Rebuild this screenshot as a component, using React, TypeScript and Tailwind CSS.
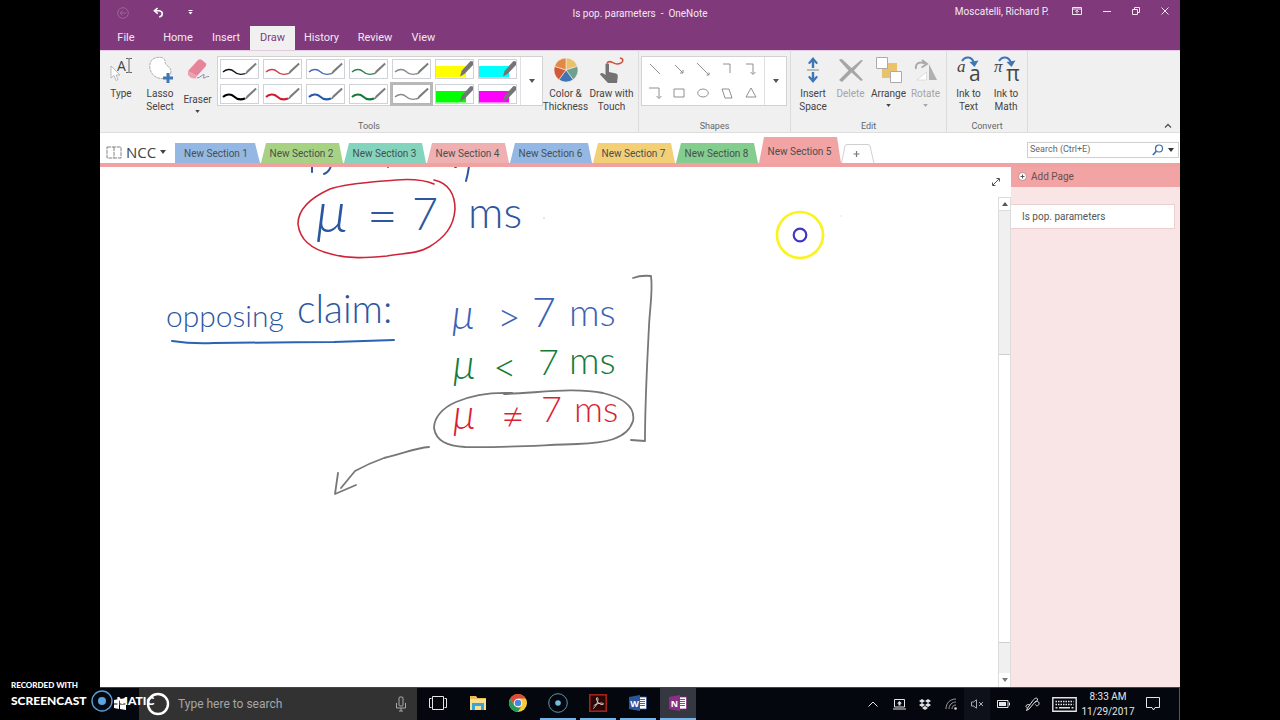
import React from "react";

const cx = (...parts: (string | false | undefined)[]) => parts.filter(Boolean).join(" ");

function Caret({ className }: { className?: string }) {
  return (
    <svg width="6" height="4" viewBox="0 0 6 4" className={className} aria-hidden="true">
      <path d="M0 0h6L3 4z" fill="currentColor" />
    </svg>
  );
}

/* ---------- Title bar ---------- */

function TitleBar() {
  return (
    <header className="relative flex h-[26px] items-center bg-[#80397b] text-[10px] text-[#f3e8f2]">
      <div className="flex items-center gap-6 pl-[17px]">
        <button aria-label="Back" className="text-[#9c6498]">
          <svg width="12" height="12" viewBox="0 0 12 12" fill="none" stroke="currentColor">
            <circle cx="6" cy="6" r="5.3" />
            <path d="M9 6H3.2M5.500 3.600 3.100 6l2.400 2.400" />
          </svg>
        </button>
        <button aria-label="Undo" className="pb-[2px] text-white">
          <svg width="11" height="11" viewBox="0 0 11 11" fill="none" stroke="currentColor" strokeWidth="1.600">
            <path d="M4.600 1 1.400 3.800l3.400 2.800M1.600 3.800h4.600c4.200.4 4 5.600 0 6.200" />
          </svg>
        </button>
        <button aria-label="Customize toolbar" className="pb-[2px] text-white">
          <svg width="5" height="5" viewBox="0 0 5 5" fill="currentColor">
            <path d="M.5 0h4v1h-4zM.5 2h4l-2 2.400z" />
          </svg>
        </button>
      </div>
      <h1 className="absolute inset-x-0 text-center">Is pop. parameters&nbsp; -&nbsp; OneNote</h1>
      <div className="relative ml-auto flex items-center pr-[11px]">
        <span className="mr-[23px] pb-1">Moscatelli, Richard P.</span>
        <div className="flex items-center gap-[21px] pb-[5px]">
          <button aria-label="Ribbon display options">
            <svg width="10" height="8" viewBox="0 0 10 8" fill="none" stroke="currentColor">
              <path d="M.5.5h9v7h-9zM.5 2h9M5 6.500V3.200M3.400 4.800 5 3.200l1.600 1.600" />
            </svg>
          </button>
          <button aria-label="Minimize">
            <svg width="8" height="8" viewBox="0 0 8 8" stroke="currentColor">
              <path d="M0 4.500h8" />
            </svg>
          </button>
          <button aria-label="Restore">
            <svg width="8" height="8" viewBox="0 0 8 8" fill="none" stroke="currentColor">
              <path d="M.5 2.500h5v5h-5zM2.500 2.500v-2h5v5h-2" />
            </svg>
          </button>
          <button aria-label="Close">
            <svg width="8" height="8" viewBox="0 0 8 8" stroke="currentColor">
              <path d="m.5.5 7 7m0-7-7 7" />
            </svg>
          </button>
        </div>
      </div>
    </header>
  );
}

const menuTabs = ["File", "Home", "Insert", "Draw", "History", "Review", "View"];

function MenuTabs() {
  return (
    <nav className="flex h-6 bg-[#80397b] pl-[7px] text-[11px] text-[#f3e8f2]">
      {menuTabs.map((t) => (
        <button
          key={t}
          className={cx(
            "text-center",
            t === "File" && "mr-[5px] w-[38px]",
            t === "Home" && "w-14",
            t === "Insert" && "w-10",
            t === "Draw" && "ml-1 w-[45px] bg-[#f1f0f0] text-[#80397b]",
            t === "History" && "w-[53px]",
            t === "Review" && "w-[54px]",
            t === "View" && "w-[43px]"
          )}
        >
          {t}
        </button>
      ))}
    </nav>
  );
}

/* ---------- Ribbon ---------- */

function RibbonButton({
  icon,
  label,
  width,
  low,
  dim,
  menu,
}: {
  icon: React.ReactNode;
  label: string[];
  width: string;
  low?: boolean;
  dim?: boolean;
  menu?: boolean;
}) {
  return (
    <button className={cx("flex shrink-0 flex-col items-center", width, dim ? "text-[#a5a5a5]" : "text-[#444]")}>
      <span className={cx("flex h-7 items-center justify-center", low && "mb-[6px]")}>{icon}</span>
      <span className="mt-[3px] flex flex-col text-[10px] leading-[13px] whitespace-nowrap">
        {label.map((l) => (
          <span key={l}>{l}</span>
        ))}
      </span>
      {menu && <Caret className="mt-1 h-[3px] w-[5px]" />}
    </button>
  );
}

function Group({ name, width, children }: { name: string; width: string; children: React.ReactNode }) {
  return (
    <section className={cx("flex shrink-0 flex-col border-r border-[#dcdcdc] pt-[6px]", width)}>
      <div className="flex h-[62px] items-start">{children}</div>
      <h2 className="mt-[3px] text-center text-[9px] leading-3 text-[#666]">{name}</h2>
    </section>
  );
}

function Pen({ color, bold, active }: { color: string; bold?: boolean; active?: boolean }) {
  return (
    <button
      aria-label="Pen"
      className={cx(
        "h-5 w-[39px] border bg-white",
        active ? "border-[#b5b5b5] outline-2 outline-[#b9b9b9]" : "border-[#cfd2d6]"
      )}
    >
      <svg width="37" height="18" viewBox="0 0 37 18" fill="none">
        <path d="M2 12c3-3 8-3.500 11-.5s7 3.500 11 2" stroke={color} strokeWidth={bold ? 2 : 1.3} />
        <path d="m23 15 3-4.500L34.500 2.800 35.800 4.200 26 13.500z" fill="#7b7b7b" />
      </svg>
    </button>
  );
}

function Highlighter({ color }: { color: string }) {
  return (
    <button aria-label="Highlighter" className="h-5 w-[39px] border border-[#cfd2d6] bg-white">
      <svg width="37" height="18" viewBox="0 0 37 18">
        <path d="M0 6h30v11.500H0z" fill={color} />
        <path d="m24 16.500 1.500-5.500 9-10 2.500.5V5l-8.500 9z" fill="#757575" />
      </svg>
    </button>
  );
}

function ToolGallery() {
  return (
    <div className="flex h-[50px] shrink-0 border border-[#d2d2d2] bg-white">
      <div className="grid grid-cols-[repeat(7,39px)] content-start gap-x-1 gap-y-[5px] pt-[2px] pr-[3px] pl-[2px]">
        <Pen color="#111" />
        <Pen color="#d13a48" />
        <Pen color="#4a68b8" />
        <Pen color="#2e8050" />
        <Pen color="#888" />
        <Highlighter color="#ffff00" />
        <Highlighter color="#00ffff" />
        <Pen color="#000" bold />
        <Pen color="#cf1d2b" bold />
        <Pen color="#2359ad" bold />
        <Pen color="#15793a" bold />
        <Pen color="#888" active />
        <Highlighter color="#00ff00" />
        <Highlighter color="#ff00ff" />
      </div>
      <button aria-label="More pens" className="flex w-[22px] items-center justify-center border-l border-[#e0e0e0] text-[#555]">
        <Caret />
      </button>
    </div>
  );
}

const shapes = [
  "M3 4l10 10",
  "M4 5l8 8M12 10v3H9",
  "M2 3l12 12M14 12.500V15h-2.500",
  "M4 4h7v9",
  "M3 4h7v10M7.500 12l2.500 2.500 2.500-2.500",
  "M4 4h8v10M9.500 12l2.500 2.500 2.500-2.500M4 4H2",
  "M3 5h10v8H3z",
  "M8 5c7 .3 7 7.700 0 8C1 12.700 1 5.300 8 5z",
  "M3 5h7l3 9H6z",
  "M8 4l5 9H3z",
];

function ShapeGallery() {
  return (
    <div className="ml-[2px] flex h-[50px] border border-[#d2d2d2] bg-white">
      <div className="grid grid-cols-[repeat(5,24px)] grid-rows-2 items-center justify-items-center pl-px pr-px">
        {shapes.map((d) => (
          <button key={d} aria-label="Shape">
            <svg width="16" height="18" viewBox="0 0 16 18" fill="none" stroke="#858585" strokeWidth="0.9">
              <path d={d} />
            </svg>
          </button>
        ))}
      </div>
      <button aria-label="More shapes" className="flex w-[22px] items-center justify-center border-l border-[#e0e0e0] text-[#555]">
        <Caret />
      </button>
    </div>
  );
}

const TypeIcon = (
  <svg width="24" height="26" viewBox="0 0 24 26" fill="none">
    <path d="M2 9v12l3-2.500 2 5 2-1-2-4.500h4z" fill="#fff" stroke="#aaa" strokeWidth=".8" />
    <text x="8" y="14" fontSize="14" fontFamily="Open Sans, sans-serif" fill="#444">A</text>
    <path d="M17 1.500h2.500l.5.500.5-.5H23M20 2v13M17 15.500h2.500l.5-.5.500.5H23" stroke="#555" strokeWidth=".9" />
  </svg>
);
const LassoIcon = (
  <svg width="26" height="28" viewBox="0 0 26 28">
    <path d="M6 3c5-3 12-2 12 2-.500 5 6 5 6 11-1 7-10 8-15 5C3 18 0 8 6 3z" fill="#fff" stroke="#9a9a9a" strokeWidth=".8" strokeDasharray="3 .7" />
    <path d="M21 17v10M16 22h10" stroke="#3f76b5" strokeWidth="3" />
  </svg>
);
const EraserIcon = (
  <svg width="24" height="24" viewBox="0 0 24 24" fill="none">
    <path d="m2 13 10-11q2-1.500 4 0l4 3.500q.8 1.500-.5 3L11 18z" fill="#e6849a" />
    <path d="m2 13 9 5-1.500 2.500Q5 21 2 17z" fill="#ee9fb0" />
    <path d="M11 20c3 0 6-4 7-3.500s-2 4 0 3.500 3-2 5-1.500" stroke="#7e90a8" />
  </svg>
);
const wheel = [
  ["M12 12V0a12 12 0 0 1 11.400 8.300z", "#ecc06b"],
  ["M12 12l11.400-3.700a12 12 0 0 1-4.300 13.400z", "#6ea08c"],
  ["M12 12l7.100 9.700a12 12 0 0 1-14.200 0z", "#3f75b3"],
  ["M12 12l-7.100 9.700A12 12 0 0 1 .6 8.300z", "#d2583a"],
  ["M12 12L.6 8.300A12 12 0 0 1 12 0z", "#e28a45"],
];
const ColorIcon = (
  <svg width="24" height="24" viewBox="0 0 24 24" stroke="#f1f0f0" strokeWidth=".6">
    {wheel.map(([d, f]) => (
      <path key={f} d={d} fill={f} />
    ))}
  </svg>
);
const TouchIcon = (
  <svg width="26" height="27" viewBox="0 0 26 27" fill="none">
    <path d="M8 6c3-4 6 1 10 1 6-.300 8-5 3-6" stroke="#d14f3e" strokeWidth="1.600" />
    <path d="M6.500 7q1.800-1.500 3.500 0v8l7 1.500q2 .6 1.800 3L18 26H9L1 17.500q.500-2.300 3-1.200L6.500 18z" fill="#737373" />
  </svg>
);
const SpaceIcon = (
  <svg width="14" height="26" viewBox="0 0 14 26">
    <path d="M1 13h12" stroke="#bbb" strokeWidth="2" />
    <path d="M7 0l5 6-1.500 1.300L8.200 5v6H5.800V5L3.500 7.300 2 6zM7 26l5-6-1.500-1.300L8.200 21v-6H5.800v6l-2.300-2.300L2 20z" fill="#3f76b5" />
  </svg>
);
const DeleteIcon = (
  <svg width="26" height="24" viewBox="0 0 26 24">
    <path d="M1 2q2-2 4 0l8.500 8L23 2l2 .5L16 12.500l9 9.500-2 1-9.500-8.500L4 24l-3-2 9.500-9.500z" fill="#a6a6a6" />
  </svg>
);
const ArrangeIcon = (
  <svg width="26" height="26" viewBox="0 0 26 26">
    <path d="M6 6h15v15H6z" fill="#eac26c" />
    <path d="M.5.5h11v11H.5zM14.500 14.500h11v11h-11z" fill="#fff" stroke="#aaa" />
  </svg>
);
const RotateIcon = (
  <svg width="24" height="24" viewBox="0 0 24 24" fill="none">
    <path d="M2 11C1 5 6 3 11 5.500" stroke="#aaa" strokeWidth="2" />
    <path d="m8 2 5 4-5.500 3.500" stroke="#aaa" strokeWidth="2" />
    <path d="M15 6v16h8z" fill="#b0b0b0" />
    <path d="M12.500 14v8H3z" fill="#fff" stroke="#ccc" strokeWidth=".6" />
  </svg>
);
function ConvertIcon({ glyph }: { glyph: string }) {
  return (
    <svg width="28" height="28" viewBox="0 0 28 28">
      <text x="2" y="16" fontSize="17" fontStyle="italic" fontFamily="Liberation Serif, serif" fill="#444">{glyph}</text>
      <text x="14" y="25" fontSize="21" fontWeight="500" fontFamily="Open Sans, sans-serif" fill="#444">{glyph}</text>
      <path d="M7 5c3-5 10-5 12 2" fill="none" stroke="#3f76b5" strokeWidth="2" />
      <path d="m14.500 6 9-1.500L19.500 11z" fill="#3f76b5" />
    </svg>
  );
}

function Ribbon() {
  return (
    <div className="flex h-[83px] border-b border-[#dedede] bg-[#f1f0f0] shadow-[inset_0_1px_0_#e3cbe2]">
      <Group name="Tools" width="w-[539px]">
        <div className="flex">
          <RibbonButton icon={TypeIcon} label={["Type"]} width="w-[42px]" />
          <RibbonButton icon={LassoIcon} label={["Lasso", "Select"]} width="w-9" />
          <RibbonButton icon={EraserIcon} label={["Eraser"]} width="w-[39px]" low menu />
        </div>
        <ToolGallery />
        <div className="flex">
          <RibbonButton icon={ColorIcon} label={["Color &", "Thickness"]} width="w-[45px]" />
          <RibbonButton icon={TouchIcon} label={["Draw with", "Touch"]} width="w-[47px]" />
        </div>
      </Group>
      <Group name="Shapes" width="w-[152px]">
        <ShapeGallery />
      </Group>
      <Group name="Edit" width="w-[156px]">
        <div className="flex pl-1">
          <RibbonButton icon={SpaceIcon} label={["Insert", "Space"]} width="w-9" />
          <RibbonButton icon={DeleteIcon} label={["Delete"]} width="w-[39px]" dim />
          <RibbonButton icon={ArrangeIcon} label={["Arrange"]} width="w-[37px]" menu />
          <RibbonButton icon={RotateIcon} label={["Rotate"]} width="w-[37px]" dim menu />
        </div>
      </Group>
      <Group name="Convert" width="w-[81px]">
        <div className="flex pl-[3px]">
          <RibbonButton icon={<ConvertIcon glyph="a" />} label={["Ink to", "Text"]} width="w-[37px]" />
          <RibbonButton icon={<ConvertIcon glyph="π" />} label={["Ink to", "Math"]} width="w-[38px]" />
        </div>
      </Group>
      <button aria-label="Collapse the ribbon" className="mt-auto mr-2 mb-[3px] ml-auto text-[#555]">
        <svg width="8" height="6" viewBox="0 0 8 6" fill="none" stroke="currentColor" strokeWidth="1.300">
          <path d="m1 4.500 3-3 3 3" />
        </svg>
      </button>
    </div>
  );
}

/* ---------- Section tabs ---------- */

const sections = [
  { name: "New Section 1", color: "bg-[#94b8e3]" },
  { name: "New Section 2", color: "bg-[#a7d284]" },
  { name: "New Section 3", color: "bg-[#84d3bd]" },
  { name: "New Section 4", color: "bg-[#efb0b2]" },
  { name: "New Section 6", color: "bg-[#94b8e3]" },
  { name: "New Section 7", color: "bg-[#f3d078]" },
  { name: "New Section 8", color: "bg-[#84cd8f]" },
  { name: "New Section 5", color: "bg-[#f2a3a4]", active: true },
];

function SectionBar() {
  return (
    <div className="flex h-[34px] items-end border-b-4 border-[#f0a2a3] bg-white">
      <button className="flex h-full w-[75px] shrink-0 items-center gap-1 pt-2 pl-[6px] text-[#444]">
        <svg width="16" height="13" viewBox="0 0 16 13" fill="none" stroke="#777">
          <path d="M1 1h14v11H1zM8 1v11" strokeWidth=".9" strokeDasharray="4 .8" />
        </svg>
        <span className="font-['Open_Sans'] text-[15px] leading-5">NCC</span>
        <Caret />
      </button>
      {sections.map((s, i) => (
        <button
          key={s.name}
          className={cx(
            "shrink-0 text-[10px] text-[#47504f]",
            s.color,
            s.active ? "h-[26px] pt-[2px]" : "h-5 pt-px",
            i === 0
              ? "w-[85px] pr-[3px] [clip-path:polygon(0_0,calc(100%_-_5px)_0,100%_100%,0_100%)]"
              : "w-[83px] [clip-path:polygon(6px_0,calc(100%_-_4px)_0,100%_100%,1px_100%)]"
          )}
        >
          {s.name}
        </button>
      ))}
      <button aria-label="Create a new section" className="shrink-0">
        <svg width="34" height="19" viewBox="0 0 34 19" fill="none">
          <path d="M.5 19 4 2q.3-1.500 2-1.500h21q1.500 0 2 1.500l4 17" stroke="#d0d0d0" />
          <path d="M12.500 10h6M15.500 7v6" stroke="#777" strokeWidth="1.200" />
        </svg>
      </button>
      <div className="mr-px mb-[5px] ml-auto flex h-4 w-[152px] items-center border border-[#cfcfcf] pr-1 pl-[2px]">
        <input
          aria-label="Search"
          placeholder="Search (Ctrl+E)"
          className="min-w-0 flex-1 bg-transparent text-[9px] outline-none placeholder:text-[#666]"
        />
        <svg width="12" height="12" viewBox="0 0 12 12" fill="none" stroke="#3b6ba5" strokeWidth="1.200">
          <circle cx="7" cy="4.500" r="3.500" />
          <path d="M4.300 7.200.8 11" strokeWidth="1.600" />
        </svg>
        <Caret className="ml-1 text-[#333]" />
      </div>
    </div>
  );
}

/* ---------- Note canvas ---------- */

type InkWord = { t: string; x: number; y: number; size: number; fill: string; italic?: boolean };

const blue = "#2b579f";
const lightBlue = "#3c62b4";
const green = "#167a3c";
const red = "#d91f33";

const words: InkWord[] = [
  { t: "μ", x: 316, y: 232, size: 58, fill: blue, italic: true },
  { t: "=", x: 367, y: 235, size: 53, fill: blue },
  { t: "7", x: 412, y: 230, size: 45, fill: blue },
  { t: "ms", x: 468, y: 228, size: 44, fill: blue },
  { t: "opposing", x: 166, y: 327, size: 30, fill: blue },
  { t: "claim:", x: 297, y: 323, size: 39, fill: blue },
  { t: "μ", x: 452, y: 329, size: 41, fill: lightBlue, italic: true },
  { t: ">", x: 497, y: 332, size: 41, fill: lightBlue },
  { t: "7", x: 532, y: 327, size: 41, fill: lightBlue },
  { t: "ms", x: 569, y: 326, size: 38, fill: lightBlue },
  { t: "μ", x: 453, y: 379, size: 41, fill: green, italic: true },
  { t: "<", x: 493, y: 382, size: 41, fill: green },
  { t: "7", x: 538, y: 375, size: 36, fill: green },
  { t: "ms", x: 569, y: 374, size: 38, fill: green },
  { t: "μ", x: 453, y: 429, size: 41, fill: red, italic: true },
  { t: "≠", x: 501, y: 431, size: 41, fill: red },
  { t: "7", x: 541, y: 422, size: 36, fill: red },
  { t: "ms", x: 574, y: 422, size: 36, fill: red },
];

function Ink() {
  return (
    <svg className="absolute inset-0 h-full w-full" fill="none" strokeLinecap="round" strokeLinejoin="round">
      <g transform="translate(-100 -167)">
        <g stroke={blue} strokeWidth="2">
          <path d="M312 166v6M331 166q-2 6-7 8M388 166v1M455 167l1 0M469 166q-1 8-3 15" />
        </g>
        {words.map((w, i) => (
          <text
            key={i}
            x={w.x}
            y={w.y}
            fontSize={w.size}
            fill={w.fill}
            fontWeight="300"
            fontStyle={w.italic ? "italic" : "normal"}
            fontFamily="Lato, sans-serif"
          >
            {w.t}
          </text>
        ))}
        <path
          d="M434 184c-12-5-25-5-38-4-22 2-48 3-66 9-20 9-32 20-32 35 2 18 16 26 33 30 18 5 34 4 56 2 16-3 30-2 42-9 15-9 25-20 26-38 0-14-6-26-21-29"
          stroke="#cd2638"
          strokeWidth="1.600"
        />
        <path d="M172 341q20 3 42 2c45 0 80-1 120-1l60-2" stroke="#2b62b4" strokeWidth="2" />
        <g stroke="#777" strokeWidth="1.800">
          <path d="M633 278q8-3 18-2c2 15-1 30-2 50-2 40-4 75-4 115l-14-1" />
          <path d="M512 393c-22-1-42 3-56 9-14 6-22 16-22 26 2 13 13 18 31 19 38 1 78-2 112-3 27-1 50-4 56-23 3-16-14-24-30-28-30-6-65 0-99 1" />
          <path d="M429 447c-15 1-26 7-45 11-14 5-20 8-29 13l-14 17M338 473l-3 21 21-9" />
        </g>
        <g fill="#d8dce8">
          <circle cx="544" cy="218" r="1" />
          <circle cx="841" cy="216" r="0.700" />
        </g>
        <circle cx="800" cy="235" r="23" stroke="#fbf220" strokeWidth="2.600" />
        <circle cx="800" cy="235" r="6.300" stroke="#4138c0" strokeWidth="2.200" />
      </g>
    </svg>
  );
}

function NoteArea() {
  return (
    <div className="flex min-h-[520px] flex-1">
      <main className="relative min-w-0 flex-1 overflow-hidden bg-white">
        <Ink />
        <button aria-label="Full page view" className="absolute top-[11px] right-[11px] text-[#555]">
          <svg width="8" height="8" viewBox="0 0 8 8" fill="none" stroke="currentColor">
            <path d="M1 7l6-6M4.500.5h3v3M3.500 7.500h-3v-3" />
          </svg>
        </button>
        <div className="absolute top-[30px] right-0 bottom-0 flex w-[13px] flex-col border-x border-[#dcdcdc] bg-[#f0f0f0]">
          <button aria-label="Scroll up" className="flex h-[14px] items-center justify-center border-y border-[#dcdcdc] bg-white text-[#555]">
            <Caret className="rotate-180" />
          </button>
          <div className="basis-[143px]" />
          <div className="flex-1 border-y border-[#cfcfcf] bg-white" />
          <div className="basis-[30px]" />
          <button aria-label="Scroll down" className="flex h-[14px] items-center justify-center bg-white text-[#777]">
            <Caret />
          </button>
        </div>
      </main>
      <aside className="w-[169px] shrink-0 bg-[#fae5e6]">
        <button className="flex h-5 w-full items-center gap-1 bg-[#f2a3a4] pb-[2px] pl-[7px] text-[10px] text-[#6b4f50]">
          <svg width="9" height="9" viewBox="0 0 9 9" fill="none">
            <circle cx="4.500" cy="4.500" r="4" fill="#fff" stroke="#a07072" strokeWidth=".7" />
            <path d="M2.500 4.500h4M4.500 2.500v4" stroke="#555" />
          </svg>
          Add Page
        </button>
        <a
          href="#page"
          className="mt-[17px] mr-[5px] flex h-[25px] items-center border border-l-0 border-[#eccfd0] bg-white pl-[11px] text-[10px] text-[#555]"
        >
          Is pop. parameters
        </a>
      </aside>
    </div>
  );
}

/* ---------- Taskbar ---------- */

function TaskButton({ label, open, active, children }: { label: string; open?: boolean; active?: boolean; children: React.ReactNode }) {
  return (
    <button
      aria-label={label}
      className={cx(
        "mr-1 flex h-full w-9 items-center justify-center border-b-2",
        open ? "border-[#76b5e8]" : "border-transparent",
        active && "bg-[#353841]"
      )}
    >
      {children}
    </button>
  );
}

function OfficeIcon({ letter, color }: { letter: string; color: string }) {
  return (
    <svg width="18" height="16" viewBox="0 0 18 16">
      <path d="M8 2h9.500v12H8z" fill="#fff" stroke={color} strokeWidth=".8" />
      <path d="M11 4.500h5M11 6.500h5M11 8.500h5M11 10.500h5" stroke={color} strokeWidth=".9" />
      <path d="M0 2 11 0v16L0 14z" fill={color} />
      <text x="5.500" y="11.500" textAnchor="middle" fontSize="9" fontWeight="700" fontFamily="Open Sans, sans-serif" fill="#fff">
        {letter}
      </text>
    </svg>
  );
}

function Tray({ label, className, children }: { label: string; className?: string; children: React.ReactNode }) {
  return (
    <button aria-label={label} className={cx("flex h-full items-center justify-center", className ?? "w-[26px]")}>
      {children}
    </button>
  );
}

function Taskbar() {
  return (
    <footer className="flex h-[33px] items-center border-t border-[#444] bg-[#05070f] text-[#e4e4e4]">
      <button aria-label="Start" className="flex w-[39px] justify-center">
        <svg width="12" height="12" viewBox="0 0 12 12" fill="#fff">
          <path d="M0 2l5-1v4.500H0zM6 1l6-1v5.500H6zM0 6.500h5V11l-5-1zM6 6.500h6V12l-6-1z" />
        </svg>
      </button>
      <label className="flex h-full w-[278px] items-center bg-[#323232] pr-[11px] pl-[7px]">
        <svg width="24" height="24" viewBox="0 0 24 24" fill="none" className="shrink-0">
          <circle cx="12" cy="12" r="10" stroke="#fff" strokeWidth="2.400" />
        </svg>
        <input
          aria-label="Type here to search"
          placeholder="Type here to search"
          className="ml-2 min-w-0 flex-1 bg-transparent text-xs outline-none placeholder:text-[#a6a6a6]"
        />
        <svg width="10" height="16" viewBox="0 0 10 16" fill="none" stroke="#aaa">
          <rect x="3" y="1" width="4" height="9" rx="1" />
          <path d="M.5 7v5h9V7M5 12v3M3 15h4" />
        </svg>
      </label>
      <div className="ml-[3px] flex h-full">
        <TaskButton label="Task view">
          <svg width="18" height="14" viewBox="0 0 18 14" fill="none" stroke="#e4e4e4">
            <path d="M3.500.5h11v13h-11zM2.500 2.500h-2v9h2M15.500 2.500h2v9h-2" />
          </svg>
        </TaskButton>
        <TaskButton label="File Explorer">
          <svg width="18" height="16" viewBox="0 0 18 16">
            <path d="M1 1h6l1.500 2H17v12H1z" fill="#e9bf4e" />
            <path d="M1 4h16v11H1z" fill="#f7e091" />
            <path d="M3 15V8h12v7h-3v-4H6v4z" fill="#3ca3d8" />
          </svg>
        </TaskButton>
        <TaskButton label="Chrome">
          <svg width="18" height="18" viewBox="0 0 18 18">
            <circle cx="9" cy="9" r="9" fill="#f7cb34" />
            <path d="M9 0a9 9 0 0 1 7.800 4.500H9L5.100 11.200 1.200 4.500A9 9 0 0 1 9 0z" fill="#dc4a3d" />
            <path d="M1.200 4.500 5.100 11.200 9 13.500h3L8.500 18A9 9 0 0 1 1.200 4.500z" fill="#279a58" />
            <circle cx="9" cy="9" r="4.300" fill="#fff" />
            <circle cx="9" cy="9" r="3.300" fill="#4a86e8" />
          </svg>
        </TaskButton>
        <TaskButton label="Screen recorder" open>
          <svg width="20" height="20" viewBox="0 0 20 20">
            <circle cx="10" cy="10" r="9.300" fill="none" stroke="#5d96b5" />
            <circle cx="10" cy="10" r="2.800" fill="#74bde0" />
          </svg>
        </TaskButton>
        <TaskButton label="Acrobat Reader" open>
          <svg width="18" height="18" viewBox="0 0 18 18" fill="none">
            <rect x=".8" y=".8" width="16.400" height="16.400" fill="#2a0706" stroke="#a8251d" strokeWidth="1.500" />
            <path d="M4 14.500c2-.5 5-6 5-9.500 0-2-1.800-2-1.500 0 .5 3.500 4 6 6.500 5.500 1.500-.8-.5-1.800-3-1.300-2.500.4-5 1.300-6.500 2.800" stroke="#e8d8d6" strokeWidth=".9" />
          </svg>
        </TaskButton>
        <TaskButton label="Word" open>
          <OfficeIcon letter="W" color="#2b579a" />
        </TaskButton>
        <TaskButton label="OneNote" open active>
          <OfficeIcon letter="N" color="#8b2f86" />
        </TaskButton>
      </div>
      <div className="ml-auto flex h-full items-center border-r border-[#555] pr-[9px]">
        <Tray label="Show hidden icons">
          <svg width="10" height="6" viewBox="0 0 10 6" fill="none" stroke="currentColor">
            <path d="m.5 5.500 4.500-4.500 4.500 4.500" />
          </svg>
        </Tray>
        <Tray label="Cast">
          <svg width="13" height="11" viewBox="0 0 13 11" fill="none" stroke="currentColor">
            <path d="M1.500.5h10v7.500h-10zM0 10h13" />
            <path d="M6.500 2 9 4.500H7.500V6.500h-2v-2H4z" fill="currentColor" stroke="none" />
          </svg>
        </Tray>
        <Tray label="Dropbox">
          <svg width="12" height="11" viewBox="0 0 12 11" fill="currentColor">
            <path d="m3 0 3 2-3 2-3-2zM9 0l3 2-3 2-3-2zM3 4l3 2-3 2-3-2zM9 4l3 2-3 2-3-2zM6 7l3 2-3 2-3-2z" />
          </svg>
        </Tray>
        <Tray label="Network">
          <svg width="12" height="12" viewBox="0 0 12 12" fill="none" stroke="#999">
            <path d="M1 11C1 5 5 1 11 1M4 11c0-4 3-7 7-7M7 11c0-2.500 1.500-4 4-4" />
            <circle cx="10.500" cy="10.500" r="1.300" fill="#ddd" stroke="none" />
          </svg>
        </Tray>
        <Tray label="Volume muted" className="w-[26px] bg-[#0e1119]">
          <svg width="13" height="10" viewBox="0 0 13 10" fill="none" stroke="#aaa">
            <path d="M.5 3h2L5.500.8v8.400L2.500 7h-2zM8 3l4 4M12 3 8 7" />
          </svg>
        </Tray>
        <Tray label="Battery">
          <svg width="13" height="8" viewBox="0 0 13 8" fill="none" stroke="currentColor">
            <path d="M.5.5h10.500v7H.5zM12.500 2.500v3" />
            <path d="M2 2h7v4H2z" fill="currentColor" stroke="none" />
          </svg>
        </Tray>
        <Tray label="Pen workspace" className="w-8">
          <svg width="15" height="15" viewBox="0 0 15 15" fill="none" stroke="currentColor">
            <path d="M10 5 4 12l-2.500 1.500L2.500 11 8 3.500C9.500 1 12 .5 12.500 2s-1 2.500-2.500 3M10 5c2.500-1.500 4.500 0 4 2s-3 2.500-3.500.5M5 8C2 6.500 0 9 1.500 10.500" />
          </svg>
        </Tray>
        <Tray label="Touch keyboard" className="w-8">
          <svg width="25" height="15" viewBox="0 0 25 15" fill="none" stroke="currentColor">
            <path d="M.8.8h23.400v13.400H.8z" strokeWidth="1.400" />
            <path d="M3.500 4.500h18M3.500 7.500h18" strokeWidth="1.400" strokeDasharray="1.500 1" />
            <path d="M3.500 10.800h2M7 10.800h11M19.500 10.800h2" strokeWidth="1.400" />
          </svg>
        </Tray>
        <time className="flex w-14 flex-col text-center text-[10px] leading-[15px]">
          <span>8:33 AM</span>
          <span>11/29/2017</span>
        </time>
        <Tray label="Notifications" className="w-[34px]">
          <svg width="14" height="14" viewBox="0 0 14 14" fill="none" stroke="currentColor">
            <path d="M.5.5h13v10H9l-1.500 2.500L6 10.500H.5z" />
          </svg>
        </Tray>
      </div>
    </footer>
  );
}

function Watermark() {
  return (
    <div className="pointer-events-none absolute bottom-[7px] left-[11px] font-['Lato'] font-black text-white">
      <p className="text-[8px] leading-[8px]">RECORDED WITH</p>
      <p className="flex h-6 items-center gap-1 text-[12px] leading-none">
        <span>SCREENCAST</span>
        <svg width="22" height="22" viewBox="0 0 22 22">
          <circle cx="11" cy="11" r="10" fill="#04080f" stroke="#5b9bd5" strokeWidth="1.400" />
          <circle cx="11" cy="11" r="4" fill="#5ba4e0" />
        </svg>
        <span>MATIC</span>
      </p>
    </div>
  );
}

export default function App() {
  return (
    <div className="relative flex min-h-screen flex-col bg-black px-[100px] font-['Roboto','Noto_Sans',sans-serif]">
      <TitleBar />
      <MenuTabs />
      <Ribbon />
      <SectionBar />
      <NoteArea />
      <Taskbar />
      <Watermark />
    </div>
  );
}
